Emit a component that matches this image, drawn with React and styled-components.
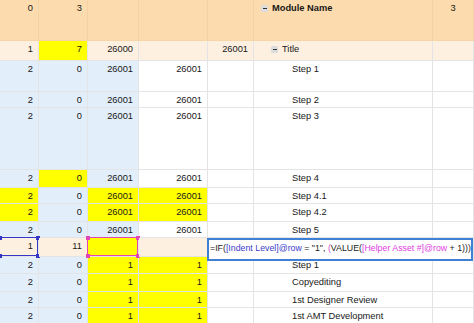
import React from 'react';
import styled, { createGlobalStyle } from 'styled-components';

const COLS = [39, 49, 51, 69, 46, 179, 41];

const PEACH = '#fcdcae';
const PEACH_LIGHT = '#fdf0e1';
const BLUE = '#e2eefa';
const YELLOW = '#ffff00';

const GlobalStyle = createGlobalStyle`
  html, body {
    margin: 0;
    padding: 0;
    background: #ffffff;
    overflow: hidden;
  }
  body {
    font-family: "Liberation Sans", Arial, sans-serif;
    color: #181818;
  }
`;

const Sheet = styled.div`
  width: 474px;
  height: 323px;
  overflow: hidden;
  display: flex;
  flex-direction: column;
`;

const Row = styled.div`
  position: relative;
  display: flex;
  flex: 0 0 auto;
  height: ${p => p.$h}px;
  z-index: ${p => (p.$top ? 2 : 1)};
`;

const Cell = styled.div`
  position: relative;
  box-sizing: border-box;
  flex: 0 0 auto;
  width: ${p => p.$w}px;
  height: 100%;
  background: ${p => p.$bg};
  border-right: 1px solid ${p => (p.$head ? 'rgba(160, 110, 40, 0.08)' : '#e4e4e4')};
  border-bottom: 1px solid ${p => (p.$head ? 'rgba(160, 110, 40, 0.06)' : '#e4e4e4')};
  padding: 3px 5px 0 5px;
  font-size: 9.3px;
  line-height: 11px;
  white-space: nowrap;
  text-align: ${p => p.$align || 'right'};
  font-weight: ${p => (p.$bold ? 700 : 400)};
`;

const NameWrap = styled.div`
  display: flex;
  align-items: center;
  gap: 4px;
  padding-left: ${p => p.$indent}px;
`;

const Toggle = styled.span`
  position: relative;
  display: inline-block;
  width: 7px;
  height: 7px;
  border-radius: 1.5px;
  background: #dcdcdc;
  flex: 0 0 auto;
  &::after {
    content: '';
    position: absolute;
    left: 1.5px;
    right: 1.5px;
    top: 3px;
    height: 1.2px;
    background: #333;
  }
`;

const Select = styled.div`
  position: absolute;
  inset: -1px 0 0 -1px;
  border: 1.5px solid ${p => p.$color};
  pointer-events: none;
`;

const Handle = styled.span`
  position: absolute;
  width: 4px;
  height: 4px;
  background: ${p => p.$color};
  ${p => (p.$v === 'top' ? 'top: -2.5px;' : 'bottom: -2.5px;')}
  ${p => (p.$h === 'left' ? 'left: -2.5px;' : 'right: -2.5px;')}
`;

const FormulaBox = styled.div`
  position: absolute;
  left: 207px;
  top: 0;
  width: 266px;
  height: 23px;
  box-sizing: border-box;
  background: #ffffff;
  border: 2px solid #3f7fd6;
  padding: 3px 0 0 1px;
  font-size: 8.8px;
  line-height: 11px;
  white-space: nowrap;
  overflow: hidden;
  color: #222;
`;

const Tok = styled.span`
  color: ${p => p.$c || '#222'};
`;

const Selection = ({ color }) => (
  <Select $color={color}>
    <Handle $color={color} $v="top" $h="left" />
    <Handle $color={color} $v="top" $h="right" />
    <Handle $color={color} $v="bottom" $h="left" />
    <Handle $color={color} $v="bottom" $h="right" />
  </Select>
);

const children = [
  { h: 31, name: 'Step 1', vals: ['2', '0', '26001', '26001'], yellow: [] },
  { h: 16, name: 'Step 2', vals: ['2', '0', '26001', '26001'], yellow: [] },
  { h: 62, name: 'Step 3', vals: ['2', '0', '26001', '26001'], yellow: [] },
  { h: 18, name: 'Step 4', vals: ['2', '0', '26001', '26001'], yellow: [1] },
  { h: 16, name: 'Step 4.1', vals: ['2', '0', '26001', '26001'], yellow: [0, 2, 3] },
  { h: 18, name: 'Step 4.2', vals: ['2', '0', '26001', '26001'], yellow: [0, 2, 3] },
  { h: 16, name: 'Step 5', vals: ['2', '0', '26001', '26001'], yellow: [] },
];

const lower = [
  { h: 17, name: 'Step 1' },
  { h: 18, name: 'Copyediting' },
  { h: 16, name: '1st Designer Review' },
  { h: 16, name: '1st AMT Development' },
];

const ChildRow = ({ h, name, vals, yellow }) => {
  const bgFor = i => (yellow.includes(i) ? YELLOW : i < 3 ? BLUE : '#ffffff');
  return (
    <Row $h={h}>
      {vals.map((v, i) => (
        <Cell key={i} $w={COLS[i]} $bg={bgFor(i)}>{v}</Cell>
      ))}
      <Cell $w={COLS[4]} $bg="#ffffff" />
      <Cell $w={COLS[5]} $bg="#ffffff" $align="left">
        <NameWrap $indent={33}>{name}</NameWrap>
      </Cell>
      <Cell $w={COLS[6]} $bg="#ffffff" />
    </Row>
  );
};

export default function App() {
  return (
    <>
      <GlobalStyle />
      <Sheet>
        <Row $h={41}>
          <Cell $head $w={COLS[0]} $bg={PEACH}>0</Cell>
          <Cell $head $w={COLS[1]} $bg={PEACH}>3</Cell>
          <Cell $head $w={COLS[2]} $bg={PEACH} />
          <Cell $head $w={COLS[3]} $bg={PEACH} />
          <Cell $head $w={COLS[4]} $bg={PEACH} />
          <Cell $head $w={COLS[5]} $bg={PEACH} $align="left" $bold>
            <NameWrap $indent={2}><Toggle />Module Name</NameWrap>
          </Cell>
          <Cell $head $w={COLS[6]} $bg={PEACH} $align="center">3</Cell>
        </Row>

        <Row $h={20}>
          <Cell $w={COLS[0]} $bg={PEACH_LIGHT}>1</Cell>
          <Cell $w={COLS[1]} $bg={YELLOW}>7</Cell>
          <Cell $w={COLS[2]} $bg={PEACH_LIGHT}>26000</Cell>
          <Cell $w={COLS[3]} $bg={PEACH_LIGHT} />
          <Cell $w={COLS[4]} $bg={PEACH_LIGHT}>26001</Cell>
          <Cell $w={COLS[5]} $bg={PEACH_LIGHT} $align="left">
            <NameWrap $indent={12}><Toggle />Title</NameWrap>
          </Cell>
          <Cell $w={COLS[6]} $bg={PEACH_LIGHT} />
        </Row>

        {children.map((r, i) => <ChildRow key={i} {...r} />)}

        <Row $h={19} $top>
          <Cell $w={COLS[0]} $bg={PEACH_LIGHT}>
            1
            <Selection color="#3535c8" />
          </Cell>
          <Cell $w={COLS[1]} $bg={PEACH_LIGHT}>11</Cell>
          <Cell $w={COLS[2]} $bg={YELLOW}>
            <Selection color="#e246b4" />
          </Cell>
          <Cell $w={COLS[3]} $bg={PEACH_LIGHT} />
          <Cell $w={COLS[4]} $bg={PEACH_LIGHT} />
          <Cell $w={COLS[5]} $bg={PEACH_LIGHT} />
          <Cell $w={COLS[6]} $bg={PEACH_LIGHT} />
          <FormulaBox>
            <Tok>=IF(</Tok>
            <Tok $c="#3b3bc9">[Indent Level]@row</Tok>
            <Tok> = "1", </Tok>
            <Tok $c="#d44ad4">(</Tok>
            <Tok>VALUE(</Tok>
            <Tok $c="#e040e0">[Helper Asset #]@row</Tok>
            <Tok> + 1)))</Tok>
          </FormulaBox>
        </Row>

        {lower.map((r, i) => (
          <ChildRow key={i} h={r.h} name={r.name} vals={['2', '0', '1', '1']} yellow={[2, 3]} />
        ))}
      </Sheet>
    </>
  );
}
